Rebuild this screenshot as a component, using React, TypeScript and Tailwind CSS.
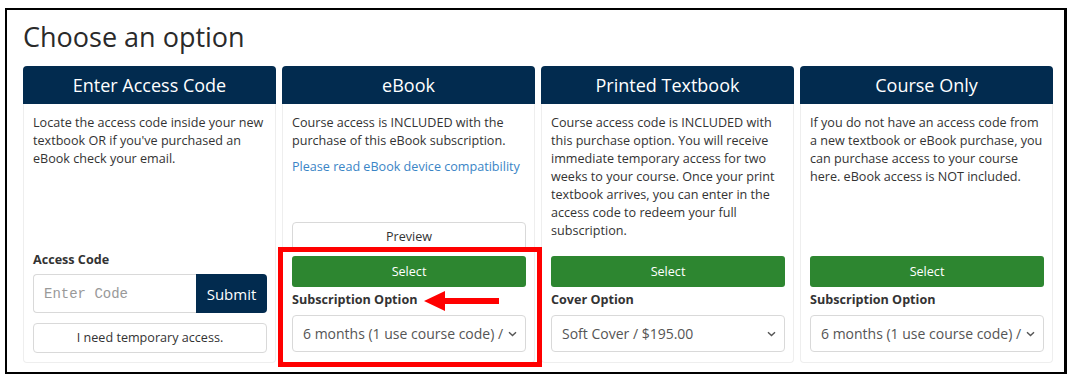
const font = { fontFamily: '"Open Sans", "Liberation Sans", sans-serif' };

function CardHeader({ title }: { title: string }) {
  return (
    <div className="flex h-[38px] items-center justify-center rounded-t-[4px] bg-[#022b4f] text-[18px] text-white">
      {title}
    </div>
  );
}

function Chevron() {
  return (
    <svg width="9" height="6" viewBox="0 0 9 6" className="shrink-0">
      <path d="M1 1.2 L4.5 4.6 L8 1.2" fill="none" stroke="#555" strokeWidth="1.4" />
    </svg>
  );
}

function Dropdown({ value }: { value: string }) {
  return (
    <div className="mt-[6px] flex h-[37px] items-center justify-between rounded-[4px] border border-[#d9d9d9] bg-white pl-[10px] pr-[8px] text-[14px] text-[#555]">
      <span className="whitespace-nowrap">{value}</span>
      <Chevron />
    </div>
  );
}

function SelectBlock({ label, value }: { label: string; value: string }) {
  return (
    <>
      <button className="flex h-[31px] w-full items-center justify-center rounded-[3px] bg-[#2d8630] text-[12.6px] text-white">
        Select
      </button>
      <div className="mt-[4px] text-[12.6px] font-bold leading-[18px] text-[#333]">{label}</div>
      <Dropdown value={value} />
    </>
  );
}

function Card({ title, children }: { title: string; children: React.ReactNode }) {
  return (
    <div className="flex h-[297px] w-[253px] shrink-0 flex-col">
      <CardHeader title={title} />
      <div className="flex flex-1 flex-col rounded-b-[4px] border border-t-0 border-[#eeeeee] pl-[9px] pr-[8px] pt-[10px] pb-[8px] text-[12.6px] leading-[18px] text-[#333]">
        {children}
      </div>
    </div>
  );
}

export default function App() {
  return (
    <div className="relative h-[392px] w-[1079px] bg-white pl-[5px] pt-[8px]" style={font}>
      <div className="h-[366px] w-[1062px] border-2 border-r-[3px] border-black pl-[16px] pt-[11px]">
        <h1 className="text-[27px] leading-[31px] text-[#2a2a2a]">Choose an option</h1>

        <div className="mt-[14px] flex gap-[6px]">
          <Card title="Enter Access Code">
            <p>Locate the access code inside your new textbook OR if you've purchased an eBook check your email.</p>
            <div className="mt-auto pb-px">
              <div className="font-bold">Access Code</div>
              <div className="mt-[5px] flex h-[39px]">
                <div
                  className="flex flex-1 items-center rounded-l-[4px] border border-r-0 border-[#d9d9d9] pl-[10px] text-[14px] text-[#999]"
                  style={{ fontFamily: '"Liberation Mono", monospace' }}
                >
                  Enter Code
                </div>
                <button className="w-[71px] rounded-r-[4px] bg-[#022b4f] text-[15px] text-white">Submit</button>
              </div>
              <button className="mt-[10px] flex h-[30px] w-full items-center justify-center rounded-[4px] border border-[#d9d9d9] bg-white text-[12.6px] text-[#333]">
                I need temporary access.
              </button>
            </div>
          </Card>

          <Card title="eBook">
            <p>Course access is INCLUDED with the purchase of this eBook subscription.</p>
            <a className="mt-[8px] text-[#3a85c6]">Please read eBook device compatibility</a>
            <div className="mt-auto pb-[2px]">
              <button className="mb-[5px] flex h-[29px] w-full items-center justify-center rounded-[4px] border border-[#d9d9d9] bg-white text-[12.6px] text-[#333]">
                Preview
              </button>
              <SelectBlock label="Subscription Option" value="6 months (1 use course code) /" />
            </div>
          </Card>

          <Card title="Printed Textbook">
            <p>
              Course access code is INCLUDED with this purchase option. You will receive immediate temporary access
              for two weeks to your course. Once your print textbook arrives, you can enter in the access code to
              redeem your full subscription.
            </p>
            <div className="mt-auto pb-[2px]">
              <SelectBlock label="Cover Option" value="Soft Cover / $195.00" />
            </div>
          </Card>

          <Card title="Course Only">
            <p>
              If you do not have an access code from a new textbook or eBook purchase, you can purchase access to your
              course here. eBook access is NOT included.
            </p>
            <div className="mt-auto pb-[2px]">
              <SelectBlock label="Subscription Option" value="6 months (1 use course code) /" />
            </div>
          </Card>
        </div>
      </div>

      {/* annotation overlay */}
      <div className="pointer-events-none absolute left-[278px] top-[247px] h-[120px] w-[264px] border-[5px] border-[#ff0000]" />
      <svg className="pointer-events-none absolute left-[424px] top-[291px]" width="76" height="20" viewBox="0 0 76 20">
        <polygon points="0,10 21,0 21,7 75,7 75,13 21,13 21,20" fill="#ff0000" />
      </svg>
    </div>
  );
}
